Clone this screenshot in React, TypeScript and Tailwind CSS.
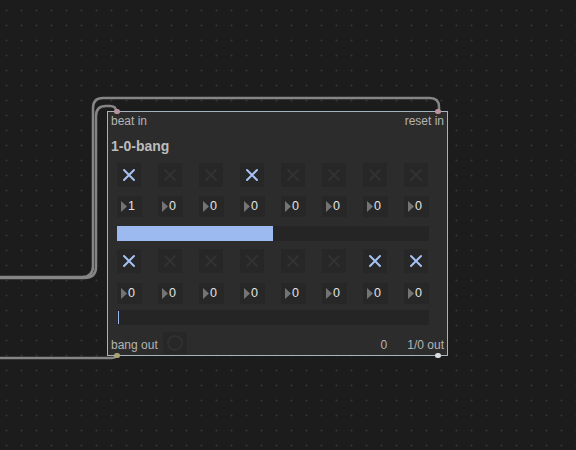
import React from "react";

const topToggles = [true, false, false, true, false, false, false, false];
const topValues = [1, 0, 0, 0, 0, 0, 0, 0];
const bottomToggles = [true, false, false, false, false, false, true, true];
const bottomValues = [0, 0, 0, 0, 0, 0, 0, 0];

const Toggle = ({ on }: { on: boolean }) => (
  <div className="w-[24px] h-[24px] bg-[#272727] flex items-center justify-center">
    <svg width="14" height="14" viewBox="0 0 14 14">
      <path
        d="M2 2L12 12M12 2L2 12"
        stroke={on ? "#a6c2f2" : "#323232"}
        strokeWidth="2"
        strokeLinecap="round"
      />
    </svg>
  </div>
);

const NumberBox = ({ value }: { value: number }) => (
  <div className="w-[25px] h-[21px] bg-[#272727] flex items-center pl-[4px]">
    <svg width="6" height="11" viewBox="0 0 6 11" className="shrink-0">
      <path d="M0 0L6 5.5L0 11Z" fill="#747474" />
    </svg>
    <span className="ml-[1px] text-[12.5px] leading-none text-[#e2e2e2]">{value}</span>
  </div>
);

const Bar = ({ fill }: { fill: number }) => (
  <div className="w-[312px] h-[15px] bg-[#252525] relative">
    {fill > 0 ? (
      <div className="h-full bg-[#9cbaf0]" style={{ width: `${fill * 100}%` }} />
    ) : (
      <div className="absolute left-[1px] top-[1px] bottom-[1px] w-[1px] bg-[#9cbaf0]" />
    )}
  </div>
);

export default function App() {
  return (
    <div
      className="relative w-[576px] h-[450px] overflow-hidden bg-[#1c1c1c] bg-[radial-gradient(circle,#353535_0.8px,transparent_1.2px)] bg-[length:15px_15px] bg-[position:-1px_3px]"
      style={{ fontFamily: '"Liberation Sans", Arial, sans-serif' }}
    >
      {/* patch cords */}
      <svg className="absolute inset-0" width="576" height="450">
        <g fill="none" stroke="#858585" strokeWidth="2.5" strokeLinecap="round">
          <path d="M-5 277 H82 Q93 277 93 266 V108 Q93 98 103 98 H430 Q439 98 439 107 V111" />
          <path d="M-5 278 H84 Q96 278 96 267 V116 Q96 106 106 106 H110 Q116 106 116 111" />
          <path d="M-5 358 H111 Q116 358 116 355" />
        </g>
      </svg>

      {/* node */}
      <div className="absolute left-[107px] top-[111px] w-[341px] h-[245px] bg-[#2c2c2c] border border-[#a3b4bf] flex flex-col text-[#b4b4b4]">
        <div className="h-[18px] flex justify-between px-[3px] text-[12px] leading-[18px]">
          <span>beat in</span>
          <span>reset in</span>
        </div>
        <div className="mt-[6px] h-[20px] px-[3px] text-[14px] leading-[20px] font-bold text-[#bdbdbd]">
          1-0-bang
        </div>

        <div className="pl-[9px] flex flex-col">
          <div className="mt-[7px] flex gap-[17px]">
            {topToggles.map((on, i) => (
              <Toggle key={i} on={on} />
            ))}
          </div>
          <div className="mt-[9px] flex gap-[16px]">
            {topValues.map((v, i) => (
              <NumberBox key={i} value={v} />
            ))}
          </div>
          <div className="mt-[9px]">
            <Bar fill={0.5} />
          </div>
          <div className="mt-[8px] flex gap-[17px]">
            {bottomToggles.map((on, i) => (
              <Toggle key={i} on={on} />
            ))}
          </div>
          <div className="mt-[10px] flex gap-[16px]">
            {bottomValues.map((v, i) => (
              <NumberBox key={i} value={v} />
            ))}
          </div>
          <div className="mt-[6px]">
            <Bar fill={0} />
          </div>
        </div>

        <div className="mt-[7px] h-[22px] flex items-end pl-[3px] pr-[3px] text-[12px] leading-[18px]">
          <span>bang out</span>
          <div className="ml-[5px] w-[24px] h-[22px] bg-[#272727] flex items-center justify-center">
            <div className="w-[16px] h-[16px] rounded-full border-2 border-[#303030]" />
          </div>
          <span className="ml-auto">0</span>
          <span className="ml-[20px]">1/0 out</span>
        </div>

        {/* inlets / outlets */}
        <div className="absolute left-[6px] -top-[3px] w-[6px] h-[5px] rounded-full bg-[#b8939c]" />
        <div className="absolute right-[6px] -top-[3px] w-[6px] h-[5px] rounded-full bg-[#b8939c]" />
        <div className="absolute left-[6px] -bottom-[3px] w-[6px] h-[5px] rounded-full bg-[#aaa574]" />
        <div className="absolute right-[6px] -bottom-[3px] w-[6px] h-[5px] rounded-full bg-[#dcdcdc]" />
      </div>
    </div>
  );
}
